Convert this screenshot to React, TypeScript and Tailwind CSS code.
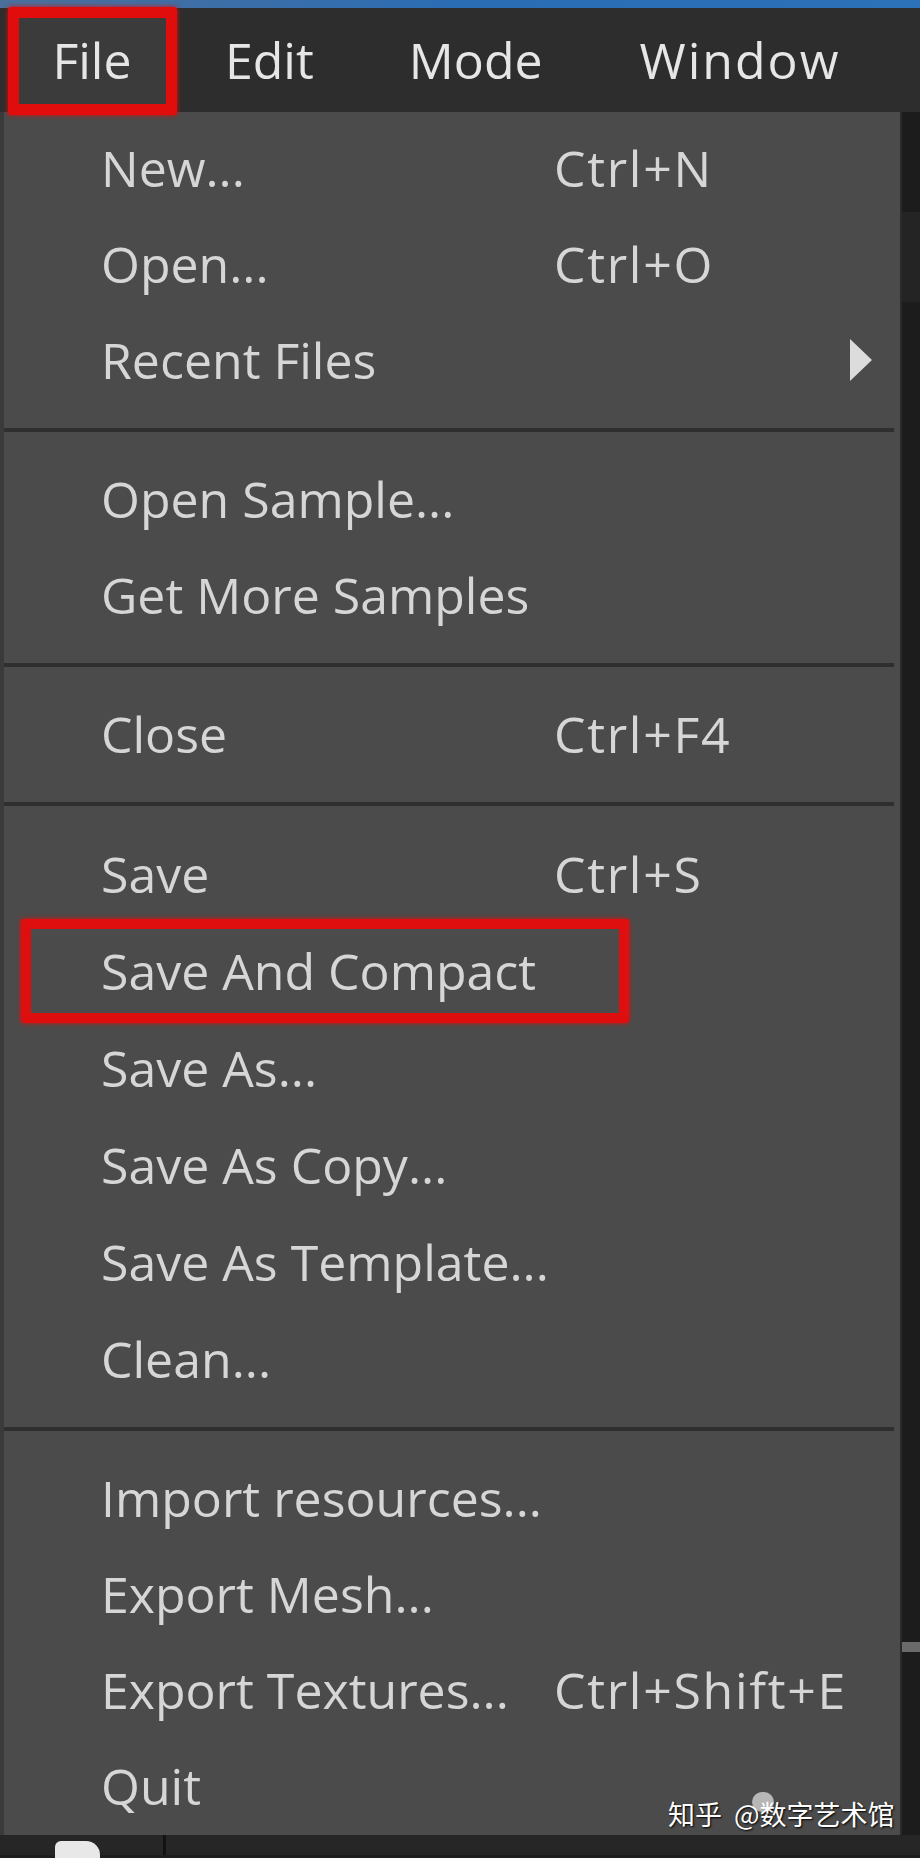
import { Fragment } from "react";

type Entry =
  | { kind: "item"; label: string; shortcut?: string; submenu?: boolean; h?: string }
  | { kind: "sep" };

const getMenuEntries = (): Entry[] => [
  { kind: "item", label: "New...", shortcut: "Ctrl+N" },
  { kind: "item", label: "Open...", shortcut: "Ctrl+O" },
  { kind: "item", label: "Recent Files", submenu: true },
  { kind: "sep" },
  { kind: "item", label: "Open Sample..." },
  { kind: "item", label: "Get More Samples" },
  { kind: "sep" },
  { kind: "item", label: "Close", shortcut: "Ctrl+F4" },
  { kind: "sep" },
  { kind: "item", label: "Save", shortcut: "Ctrl+S", h: "h-[97px]" },
  { kind: "item", label: "Save And Compact", h: "h-[97px]" },
  { kind: "item", label: "Save As...", h: "h-[97px]" },
  { kind: "item", label: "Save As Copy...", h: "h-[97px]" },
  { kind: "item", label: "Save As Template...", h: "h-[97px]" },
  { kind: "item", label: "Clean...", h: "h-[97px]" },
  { kind: "sep" },
  { kind: "item", label: "Import resources..." },
  { kind: "item", label: "Export Mesh..." },
  { kind: "item", label: "Export Textures...", shortcut: "Ctrl+Shift+E" },
  { kind: "item", label: "Quit" },
];

const App = () => {
  return (
    <div className="relative w-[920px] h-[1858px] overflow-hidden bg-[#1f1f1f] font-['Open_Sans',sans-serif]">
      {/* window title strip */}
      <div className="h-[8px] bg-gradient-to-r from-[#4a6f9a] via-[#2a6db4] to-[#2c72b8]" />

      {/* Menu bar */}
      <div className="h-[104px] bg-[#2d2d2d] flex items-center text-[50px] leading-none text-[#e6e6e6]">
        <div className="ml-[8px] w-[168px] h-full bg-[#3b3b3b] flex items-center justify-center">
          File
        </div>
        <span className="ml-[49px]">Edit</span>
        <span className="ml-[95px]">Mode</span>
        <span className="ml-[97px] tracking-[2px]">Window</span>
      </div>

      {/* Dropdown */}
      <div className="flex">
        <div className="w-[900px] bg-[#4b4b4b] border-l-[4px] border-[#3a3a3a] pt-[8px] pb-[1px] text-[50px] leading-none text-[#d6d6d6]">
          {getMenuEntries().map((entry, i) => (
            <Fragment key={i}>
              {entry.kind === "sep" ? (
                <div className="h-[43px] flex items-center">
                  <div className="w-[890px] h-[4px] bg-[#2f2f2f]" />
                </div>
              ) : (
                <div className={`flex items-center ${entry.h ?? "h-[96px]"}`}>
                  <span className="ml-[97px] w-[453px] whitespace-nowrap">
                    {entry.label}
                  </span>
                  {entry.shortcut && (
                    <span className="whitespace-nowrap tracking-[1.7px]">
                      {entry.shortcut}
                    </span>
                  )}
                  {entry.submenu && (
                    <svg
                      className="ml-[296px]"
                      width="22"
                      height="42"
                      viewBox="0 0 22 42"
                    >
                      <polygon points="0,0 22,21 0,42" fill="#dcdcdc" />
                    </svg>
                  )}
                </div>
              )}
            </Fragment>
          ))}
        </div>
        <div className="flex-1 border-l-[2px] border-[#2a2a2a] bg-[#1c1c1c] flex flex-col">
          <div className="h-[100px]" />
          <div className="h-[90px] bg-[#242424]" />
          <div className="h-[1340px]" />
          <div className="h-[10px] bg-[#6a6a6a]" />
        </div>
      </div>

      {/* bottom strip */}
      <div className="h-[20px] bg-[#262626] flex">
        <div className="ml-[55px] mt-[6px] w-[45px] h-[20px] rounded-tl-[6px] rounded-tr-[14px] bg-[#e8e8e8]" />
        <div className="ml-[63px] w-[3px] h-full bg-[#121212]" />
      </div>

      {/* annotation boxes */}
      <div className="absolute left-[8px] top-[7px] w-[169px] h-[108px] border-[11px] border-[#e10d0d] rounded-[3px] shadow-[0_0_5px_#e10d0d]" />
      <div className="absolute left-[21px] top-[919px] w-[608px] h-[104px] border-[10px] border-[#df0f0f] rounded-[3px] shadow-[0_0_5px_#df0f0f]" />

      {/* watermark */}
      <div className="absolute left-[668px] top-[1800px] flex items-center text-[27px] leading-none text-white font-['Noto_Sans_CJK_SC',sans-serif] [text-shadow:1px_1px_2px_#000]">
        <span>知乎</span>
        <span className="ml-[12px] relative">
          @数字艺术馆
          <span className="absolute left-[18px] -top-[8px] w-[22px] h-[20px] rounded-full bg-white/60" />
        </span>
      </div>
    </div>
  );
};

export default App;
